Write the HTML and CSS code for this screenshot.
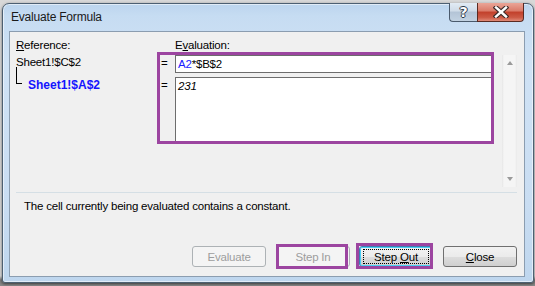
FILE: index.html
```html
<!DOCTYPE html>
<html>
<head>
<meta charset="utf-8">
<title>Evaluate Formula</title>
<link rel="stylesheet" href="styles.css">
</head>
<body>
<div class="window">
  <div class="titlebar">
    <span class="title">Evaluate Formula</span>
    <div class="caption-btns">
      <div class="cbtn help"><span class="qmark">?</span></div>
      <div class="cbtn close">
        <svg width="16" height="12" viewBox="0 0 16 12">
          <path d="M3 1.5 L13 10.5 M13 1.5 L3 10.5" stroke="#3a2a28" stroke-width="4.6" stroke-linecap="square" fill="none"/>
          <path d="M3 1.5 L13 10.5 M13 1.5 L3 10.5" stroke="#ffffff" stroke-width="2.4" stroke-linecap="square" fill="none"/>
        </svg>
      </div>
    </div>
  </div>
  <div class="client">
    <div class="labels">
      <div class="lab-ref"><u>R</u>eference:</div>
      <div class="lab-eval">E<u>v</u>aluation:</div>
    </div>
    <div class="main">
      <div class="refcol">
        <div class="ref1">Sheet1!$C$2</div>
        <div class="ref2"><span class="elbow"></span><span class="ref2-text">Sheet1!$A$2</span></div>
      </div>
      <div class="evalframe">
        <div class="evrow r1"><span class="eq">=</span><div class="box b1"><span class="blue">A2</span>*$B$2</div></div>
        <div class="evrow r2"><span class="eq">=</span><div class="box b2"><i>231</i></div></div>
      </div>
      <div class="vscroll"><span class="arr up"></span><span class="arr down"></span></div>
    </div>
    <div class="sep"></div>
    <div class="status">The cell currently being evaluated contains a constant.</div>
    <div class="buttons">
      <div class="btn disabled"><span>Evaluate</span></div>
      <div class="btn disabled b-in"><span>Step In</span></div>
      <div class="btn focused b-out"><div class="focusrect"><span>Step <u>O</u>ut</span></div></div>
      <div class="btn b-close"><span><u>C</u>lose</span></div>
    </div>
  </div>
</div>
<div class="mark mark-in"></div>
<div class="mark mark-out"></div>
</body>
</html>
```
FILE: styles.css
```css
* { box-sizing: border-box; }
html, body { margin: 0; padding: 0; }
body {
  width: 535px;
  height: 286px;
  overflow: hidden;
  position: relative;
  background: linear-gradient(180deg, #d8d8d8 0px, #d8d8d8 276px, #7a7a7a 280px, #8a8a8a 286px);
  font-family: "Liberation Sans", Arial, sans-serif;
  font-size: 11.5px;
  letter-spacing: -0.2px;
  color: #000;
}
u { text-decoration: underline; text-underline-offset: 1px; }

.window {
  margin: 3px 0 0 2px;
  width: 532px;
  height: 280px;
  border: 1px solid #4d6072;
  border-radius: 7px 7px 3px 3px;
  background: linear-gradient(180deg, #bcd5ee 0px, #c6dcf2 12px, #cfe2f5 60px, #c9ddf2 200px, #bed6ee 280px);
  padding: 0 8px 5px 6px;
  box-shadow: 0 1px 3px rgba(0,0,0,0.55), inset 0 0 0 1px rgba(255,255,255,0.55);
  display: flex;
  flex-direction: column;
}

.titlebar {
  height: 27px;
  display: flex;
  align-items: flex-start;
  justify-content: space-between;
}
.title {
  margin-top: 6px;
  padding-left: 2px;
  line-height: 15px;
  font-size: 12px;
  color: #1a1a1a;
}
.caption-btns {
  display: flex;
  margin-top: -1px;
  margin-right: 1px;
}
.cbtn {
  height: 19px;
  display: flex;
  align-items: center;
  justify-content: center;
  border: 1px solid #4a5a6c;
  border-top: none;
}
.help {
  width: 28px;
  border-radius: 0 0 0 4px;
  border-right: none;
  background: linear-gradient(180deg, #e2ebf4 0%, #cfdbe8 45%, #b3c4d6 50%, #c2d2e2 100%);
}
.qmark {
  font-family: "DejaVu Sans", sans-serif;
  font-weight: bold;
  font-size: 14px;
  color: #fff;
  line-height: 14px;
  text-shadow: -1px 0 #2d3a48, 1px 0 #2d3a48, 0 -1px #2d3a48, 0 1px #2d3a48;
}
.close {
  width: 47px;
  border-radius: 0 0 4px 0;
  border-color: #5a2a22;
  background: linear-gradient(180deg, #eaa597 0%, #da7a68 45%, #c2402b 50%, #cc5a45 80%, #e08a78 100%);
}

.client {
  height: 246px;
  background: #f0f0f0;
  border: 1px solid #8b9db0;
  padding: 0 7px 0 6px;
  display: flex;
  flex-direction: column;
}

.labels {
  display: flex;
  margin-top: 6px;
  height: 14px;
  line-height: 14px;
}
.lab-ref { width: 159px; }

.main {
  display: flex;
  align-items: flex-start;
}
.refcol { width: 141px; }
.ref1 {
  margin-top: 3px;
  line-height: 14px;
}
.ref2 {
  display: flex;
  align-items: flex-start;
  margin-top: -2px;
}
.elbow {
  width: 6px;
  height: 17px;
  border-left: 1px solid #000;
  border-bottom: 1px solid #000;
}
.ref2-text {
  margin-top: 11px;
  margin-left: 6px;
  line-height: 14px;
  font-size: 12px;
  letter-spacing: 0;
  font-weight: bold;
  color: #1414ff;
}

.evalframe {
  width: 337px;
  height: 92px;
  border: 3px solid #9c45a0;
  display: flex;
  flex-direction: column;
}
.evrow { display: flex; }
.r1 { height: 18px; }
.r2 { flex: 1; margin-top: 4px; }
.eq {
  width: 15px;
  padding-left: 1px;
  line-height: 16px;
}
.box {
  flex: 1;
  background: #fff;
  border-left: 1px solid #6d6d6d;
  border-top: 1px solid #6d6d6d;
  padding-left: 2px;
  line-height: 16px;
}
.b1 { border-bottom: 1px solid #6d6d6d; }
.blue { color: #1a1aff; }
.b2 i { font-style: italic; }

.vscroll {
  width: 15px;
  height: 132px;
  margin-left: 8px;
  margin-top: 3px;
  background: linear-gradient(90deg, #e6e6e6 0px, #f5f5f5 2px, #f5f5f5 13px, #e9e9e9 15px);
  display: flex;
  flex-direction: column;
  justify-content: space-between;
  align-items: center;
  padding: 6px 0 6px;
}
.arr {
  width: 0; height: 0;
  border-left: 3.5px solid transparent;
  border-right: 3.5px solid transparent;
}
.arr.up { border-bottom: 4px solid #9a9a9a; }
.arr.down { border-top: 4px solid #9a9a9a; }

.sep {
  margin-top: 5px;
  height: 1px;
  background: #d5dfe5;
}
.status {
  margin-top: 6px;
  padding-left: 8px;
  line-height: 14px;
}

.buttons {
  display: flex;
  margin-top: 33px;
  padding-left: 176px;
}
.btn {
  width: 74px;
  height: 21px;
  border: 1px solid #707070;
  border-radius: 3px;
  background: linear-gradient(180deg, #f2f2f2 0%, #ebebeb 50%, #dddddd 51%, #cfcfcf 100%);
  display: flex;
  align-items: center;
  justify-content: center;
  line-height: 14px;
}
.btn.disabled {
  border-color: #adb2b5;
  background: #f4f4f4;
  color: #9d9d9d;
}
.b-in { margin-left: 10px; }
.b-out { margin-left: 9px; }
.b-close { margin-left: 10px; }
.btn.focused {
  border-color: #3c7fb1;
  box-shadow: inset 0 0 0 1px #48cdf5;
}
.focusrect {
  display: flex;
  align-items: center;
  justify-content: center;
  width: 66px;
  height: 15px;
  border: 1px dotted #000;
}

.mark {
  position: absolute;
  border: 3px solid #9c45a0;
}
.mark-in { left: 276px; top: 244px; width: 72px; height: 25px; }
.mark-out { left: 356px; top: 243px; width: 77px; height: 26px; }
```
